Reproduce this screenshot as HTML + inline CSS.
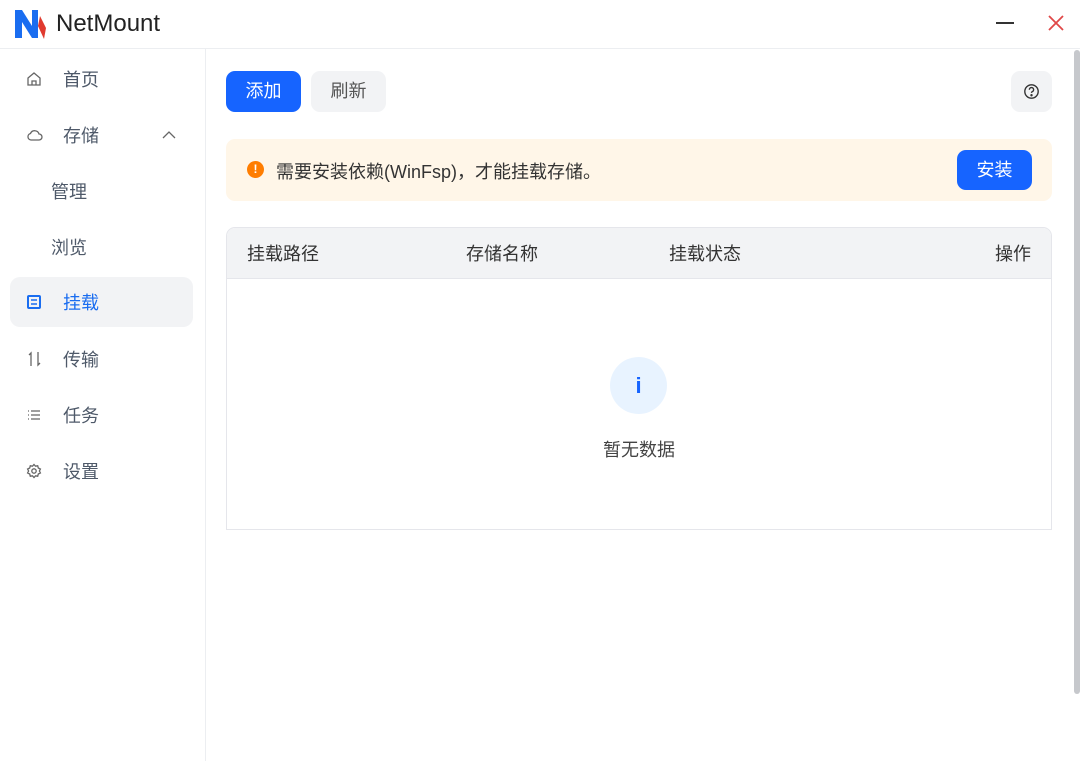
<!DOCTYPE html>
<html><head><meta charset="utf-8"><style>
*{box-sizing:border-box;margin:0;padding:0}
body{width:1080px;height:761px;background:#fff;font-family:"Liberation Sans","Noto Sans CJK SC",sans-serif;position:relative;overflow:hidden;color:#333}
.abs{position:absolute}
.title{left:56px;top:10px;font-size:24px;color:#222}
.hdr{left:0;top:48px;width:1080px;height:1px;background:#eceef1}
.side{left:205px;top:49px;width:1px;height:712px;background:#eceef1}
.nav{position:absolute;left:10px;width:183px;height:50px;border-radius:10px;font-size:18px;color:#4e5969;line-height:50px}
.nav span{position:absolute;left:53px;top:1px}
.nav svg{position:absolute;left:16px;top:17px}
.sub{position:absolute;left:51px;font-size:18px;color:#4e5969}
.btn{position:absolute;border-radius:9px;font-size:18px;text-align:center}
.th{position:absolute;top:240px;font-size:18px;color:#333}
</style></head><body>
<svg class="abs" style="left:13px;top:8px" width="36" height="32" viewBox="0 0 36 32">
<path d="M2 2h7l10 16V2h6v28h-6L9 14v16H2z" fill="#1a6df0"/>
<path d="M27 8l6 12-2 11-6-13z" fill="#e03a2f"/>
</svg>
<div class="abs title">NetMount</div>
<div class="abs" style="left:996px;top:22px;width:18px;height:2px;background:#333"></div>
<svg class="abs" style="left:1048px;top:15px" width="16" height="16"><path d="M1 1L15 15M15 1L1 15" stroke="#e04848" stroke-width="1.8"/></svg>
<div class="abs hdr"></div>
<div class="abs side"></div>
<div class="abs" style="left:1074px;top:50px;width:6px;height:644px;background:#c6c8cc;border-radius:3px"></div>

<div class="nav" style="top:54px"><svg width="16" height="16" viewBox="0 0 16 16" fill="none" stroke="#666" stroke-width="1.3"><path d="M2 7l6-5 6 5v7H2z M6 14v-4h4v4"/></svg><span>首页</span></div>
<div class="nav" style="top:110px"><svg width="18" height="16" viewBox="0 0 18 16" fill="none" stroke="#666" stroke-width="1.3"><path d="M5 13h8a3 3 0 0 0 0-6 4.5 4.5 0 0 0-8.5-.5A3.3 3.3 0 0 0 5 13z"/></svg><span>存储</span>
<svg style="left:152px;top:20px" width="14" height="10"><path d="M1 8l6-6 6 6" fill="none" stroke="#666" stroke-width="1.3"/></svg></div>
<div class="sub" style="top:178px">管理</div>
<div class="sub" style="top:234px">浏览</div>
<div class="nav" style="top:277px;background:#f2f3f5;color:#1a6df0"><svg width="16" height="16" viewBox="0 0 16 16" fill="none" stroke="#1a6df0" stroke-width="2"><rect x="2" y="2" width="12" height="12" rx="1"/><path d="M5 6h6M5 10h6" stroke-width="1.6"/></svg><span>挂载</span></div>
<div class="nav" style="top:334px"><svg width="18" height="16" viewBox="0 0 18 16" fill="none" stroke="#666" stroke-width="1.3"><path d="M3 4l2-2v13M12 1v13l2-2"/></svg><span>传输</span></div>
<div class="nav" style="top:390px"><svg width="16" height="16" viewBox="0 0 16 16" fill="none" stroke="#666" stroke-width="1.3"><path d="M2 4h1M2 8h1M2 12h1M5 4h9M5 8h9M5 12h9"/></svg><span>任务</span></div>
<div class="nav" style="top:446px"><svg width="16" height="16" viewBox="0 0 16 16" fill="none" stroke="#666" stroke-width="1.3"><circle cx="8" cy="8" r="2.2"/><path d="M8 1.5l1.5 1.7 2.2-.4.6 2.2 2.1 1-1 2 1 2-2.1 1-.6 2.2-2.2-.4L8 14.5l-1.5-1.7-2.2.4-.6-2.2-2.1-1 1-2-1-2 2.1-1 .6-2.2 2.2.4z"/></svg><span>设置</span></div>

<div class="btn" style="left:226px;top:71px;width:75px;height:41px;line-height:41px;background:#1664ff;color:#fff">添加</div>
<div class="btn" style="left:311px;top:71px;width:75px;height:41px;line-height:41px;background:#f2f3f5;color:#555">刷新</div>
<div class="btn" style="left:1011px;top:71px;width:41px;height:41px;background:#f2f3f5"><svg style="margin-top:12px" width="17" height="17" viewBox="0 0 16 16" fill="none" stroke="#333" stroke-width="1.3"><circle cx="8" cy="8" r="6.3"/><path d="M6 6.3a2 2 0 1 1 2.6 1.9c-.5.2-.6.5-.6 1.1"/><circle cx="8" cy="11.5" r=".5" fill="#333"/></svg></div>

<div class="abs" style="left:226px;top:139px;width:826px;height:62px;background:#fff6e8;border-radius:9px"></div>
<div class="abs" style="left:247px;top:161px;width:17px;height:17px;border-radius:50%;background:#ff7d00;color:#fff;font-size:12px;font-weight:bold;text-align:center;line-height:17px">!</div>
<div class="abs" style="left:276px;top:158px;font-size:18px;color:#333">需要安装依赖(WinFsp)，才能挂载存储。</div>
<div class="btn" style="left:957px;top:150px;width:75px;height:40px;line-height:40px;background:#1664ff;color:#fff">安装</div>

<div class="abs" style="left:226px;top:227px;width:826px;height:303px;border:1px solid #e5e6eb;border-radius:9px 9px 0 0"></div>
<div class="abs" style="left:227px;top:228px;width:824px;height:51px;background:#f2f3f5;border-radius:8px 8px 0 0;border-bottom:1px solid #e5e6eb"></div>
<div class="th" style="left:247px">挂载路径</div>
<div class="th" style="left:466px">存储名称</div>
<div class="th" style="left:669px">挂载状态</div>
<div class="th" style="left:995px">操作</div>
<div class="abs" style="left:610px;top:357px;width:57px;height:57px;border-radius:50%;background:#e8f3ff;color:#1664ff;font-size:22px;font-weight:bold;text-align:center;line-height:57px">i</div>
<div class="abs" style="left:603px;top:436px;font-size:18px;color:#444">暂无数据</div>
</body></html>
